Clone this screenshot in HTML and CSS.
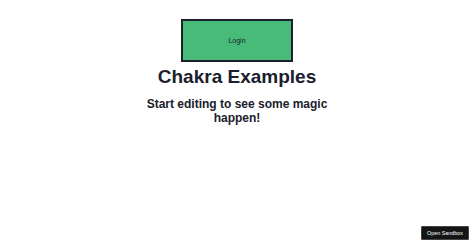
FILE: index.html
```html
<!DOCTYPE html>
<html>
<head>
<meta charset="utf-8">
<link rel="stylesheet" href="styles.css">
</head>
<body>
<div class="app">
  <button class="login">Login</button>
  <h1 class="title">Chakra Examples</h1>
  <h2 class="subtitle">Start editing to see some magic happen!</h2>
</div>
<a class="sandbox">Open Sandbox</a>
</body>
</html>
```
FILE: styles.css
```css
html, body {
  margin: 0;
  padding: 0;
  background: #ffffff;
  height: 100%;
}
body {
  font-family: "Liberation Sans", Arial, sans-serif;
  color: #1a202c;
  position: relative;
}
.app {
  display: flex;
  flex-direction: column;
  align-items: center;
  padding-top: 19px;
  text-align: center;
}
.login {
  width: 112px;
  height: 43px;
  box-sizing: border-box;
  background: #48bb78;
  border: 2px solid #1a202c;
  font-family: "Liberation Sans", Arial, sans-serif;
  font-size: 7px;
  color: #1a202c;
  padding: 0 0 1px;
  margin: 0;
}
.title {
  font-size: 19px;
  font-weight: 700;
  margin: 4px 0 0;
  line-height: 22px;
}
.subtitle {
  font-size: 12px;
  font-weight: 700;
  line-height: 13.5px;
  max-width: 200px;
  margin: 10px 0 0;
}
.sandbox {
  position: absolute;
  right: 5px;
  bottom: 8px;
  background: #151515;
  color: #ffffff;
  font-size: 5.4px;
  line-height: 12px;
  padding: 0 5px;
  border-radius: 1px;
  border: 0.5px solid #444;
}
```
